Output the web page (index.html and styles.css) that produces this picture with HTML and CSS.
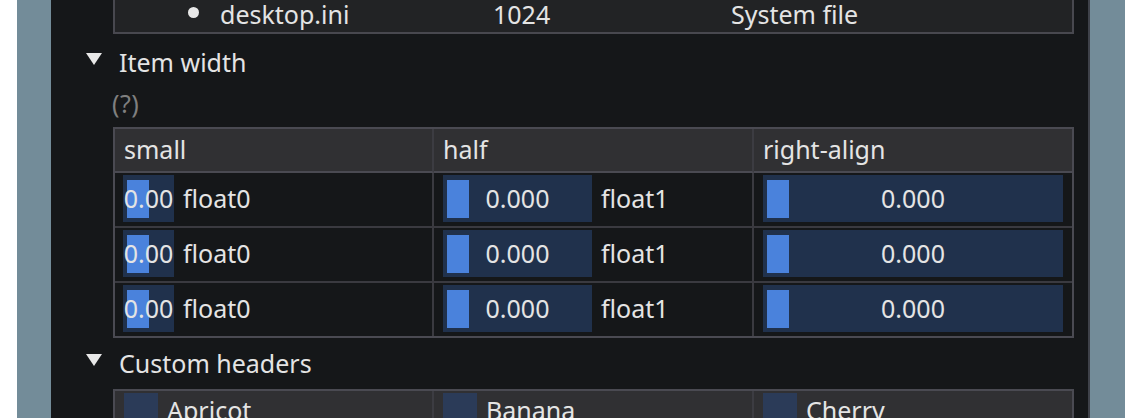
FILE: index.html
```html
<!DOCTYPE html>
<html>
<head>
<meta charset="utf-8">
<link rel="stylesheet" href="styles.css">
</head>
<body>
<div class="page">
  <div class="strip"></div>
  <div class="gutter"></div>
  <div class="window">
    <div class="content">
      <div class="tree-row">
        <div class="tcell name"><span class="bullet"></span><span>desktop.ini</span></div>
        <div class="tcell">1024</div>
        <div class="tcell">System file</div>
      </div>

      <div class="node"><span class="arrow"></span><span>Item width</span></div>
      <div class="help">(?)</div>

      <div class="table">
        <div class="hcell">small</div>
        <div class="hcell">half</div>
        <div class="hcell last">right-align</div>

        <div class="cell"><div class="frame small"><span class="grab"></span><span class="val">0.00</span></div><span class="lbl">float0</span></div>
        <div class="cell"><div class="frame half"><span class="grab"></span><span class="val">0.000</span></div><span class="lbl">float1</span></div>
        <div class="cell last"><div class="frame full"><span class="grab"></span><span class="val">0.000</span></div></div>

        <div class="cell"><div class="frame small"><span class="grab"></span><span class="val">0.00</span></div><span class="lbl">float0</span></div>
        <div class="cell"><div class="frame half"><span class="grab"></span><span class="val">0.000</span></div><span class="lbl">float1</span></div>
        <div class="cell last"><div class="frame full"><span class="grab"></span><span class="val">0.000</span></div></div>

        <div class="cell bottom"><div class="frame small"><span class="grab"></span><span class="val">0.00</span></div><span class="lbl">float0</span></div>
        <div class="cell bottom"><div class="frame half"><span class="grab"></span><span class="val">0.000</span></div><span class="lbl">float1</span></div>
        <div class="cell bottom last"><div class="frame full"><span class="grab"></span><span class="val">0.000</span></div></div>
      </div>

      <div class="node node2"><span class="arrow"></span><span>Custom headers</span></div>

      <div class="table table3">
        <div class="ccell"><span class="check"></span><span>Apricot</span></div>
        <div class="ccell"><span class="check"></span><span>Banana</span></div>
        <div class="ccell last"><span class="check"></span><span>Cherry</span></div>
      </div>
    </div>
  </div>
</div>
</body>
</html>
```

FILE: styles.css
```css
* { box-sizing: border-box; }

html, body {
  margin: 0;
  padding: 0;
}

body {
  width: 1125px;
  height: 418px;
  overflow: hidden;
  background: #738c99;
  font-family: "Noto Sans", "Open Sans", sans-serif;
  font-size: 25px;
  color: #e4e4e4;
}

.page {
  display: flex;
  height: 418px;
}

.strip {
  width: 17px;
  background: #ffffff;
}

.gutter {
  width: 34px;
}

.window {
  width: 1039px;
  background: #151719;
  border-right: 2px solid #3e4149;
}

.content {
  padding-left: 62px;
  width: 1023px;
  display: flex;
  flex-direction: column;
}

/* tree table partial row */
.tree-row {
  display: grid;
  grid-template-columns: 368px 238px 1fr;
  width: 961px;
  height: 34px;
  background: #222325;
  border-left: 2px solid #48484f;
  border-right: 2px solid #48484f;
  border-bottom: 2px solid #48484f;
}

.tcell {
  height: 32px;
  line-height: 28px;
  padding-left: 10px;
  white-space: nowrap;
}

.tcell.name {
  display: flex;
  align-items: center;
  padding-left: 73px;
  padding-bottom: 4px;
  gap: 21px;
}

.bullet {
  width: 11px;
  height: 11px;
  border-radius: 50%;
  background: #e8e8e8;
  margin-bottom: 3px;
}

/* tree nodes */
.node {
  display: flex;
  align-items: center;
  height: 42px;
  line-height: 42px;
  margin-top: 7px;
  margin-left: -27px;
  gap: 17px;
}

.node2 {
  margin-top: 4px;
}

.arrow {
  width: 0;
  height: 0;
  border-left: 8px solid transparent;
  border-right: 8px solid transparent;
  border-top: 12px solid #e8e8e8;
  margin-bottom: 6px;
}

.help {
  height: 42px;
  line-height: 38px;
  margin-top: 1px;
  margin-left: -1px;
  color: #7f7f7f;
  letter-spacing: 0.5px;
}

/* tables */
.table {
  margin-top: 1px;
  width: 961px;
  display: grid;
  grid-template-columns: 319px 320px 318px;
  border: 2px solid #4a4a52;
}

.hcell {
  height: 44px;
  line-height: 40px;
  padding-left: 9px;
  background: #303033;
  border-right: 2px solid #3c3c42;
  border-bottom: 2px solid #4a4a52;
}

.cell {
  height: 55px;
  display: flex;
  align-items: flex-start;
  padding-top: 2px;
  padding-left: 8px;
  border-right: 2px solid #3a3a40;
  border-bottom: 2px solid #3a3a40;
}

.cell.bottom {
  height: 53px;
  border-bottom: none;
}

.hcell.last, .cell.last, .ccell.last {
  border-right: none;
}

.frame {
  display: grid;
  grid-template-areas: "stack";
  height: 47px;
  background: #20314c;
  flex-shrink: 0;
}

.frame.small { width: 51px; }
.frame.half { width: 149px; margin-left: 1px; }
.frame.full { width: 300px; margin-left: 1px; }

.grab {
  grid-area: stack;
  justify-self: start;
  align-self: center;
  width: 22px;
  height: 38px;
  margin-left: 4px;
  background: #4a82dc;
}

.val {
  grid-area: stack;
  justify-self: center;
  line-height: 47px;
  white-space: nowrap;
}

.lbl {
  line-height: 47px;
  margin-left: 9px;
  white-space: nowrap;
}

.table3 {
  margin-top: 5px;
  border-bottom: none;
}

.ccell {
  display: flex;
  align-items: flex-start;
  gap: 9px;
  height: 44px;
  padding-top: 2px;
  padding-left: 9px;
  background: #303033;
  border-right: 2px solid #3c3c42;
  line-height: 34px;
}

.check {
  width: 34px;
  height: 34px;
  background: #2b3b58;
  flex-shrink: 0;
}
```
